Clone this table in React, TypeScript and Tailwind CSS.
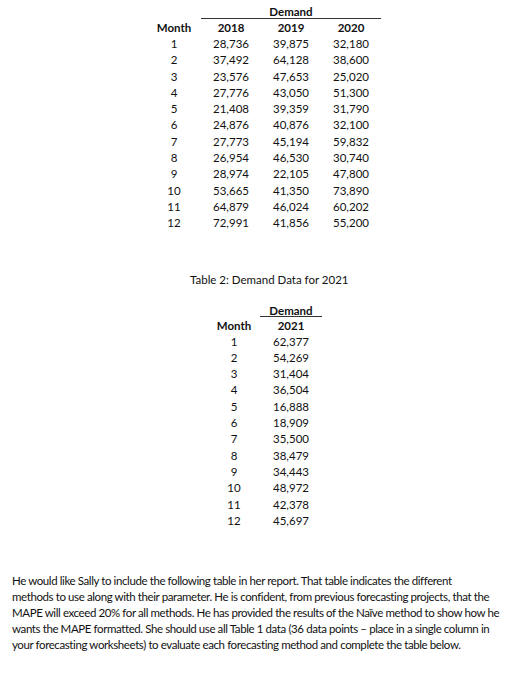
const table1 = [
  ["1", "28,736", "39,875", "32,180"],
  ["2", "37,492", "64,128", "38,600"],
  ["3", "23,576", "47,653", "25,020"],
  ["4", "27,776", "43,050", "51,300"],
  ["5", "21,408", "39,359", "31,790"],
  ["6", "24,876", "40,876", "32,100"],
  ["7", "27,773", "45,194", "59,832"],
  ["8", "26,954", "46,530", "30,740"],
  ["9", "28,974", "22,105", "47,800"],
  ["10", "53,665", "41,350", "73,890"],
  ["11", "64,879", "46,024", "60,202"],
  ["12", "72,991", "41,856", "55,200"],
]

const table2 = [
  ["1", "62,377"],
  ["2", "54,269"],
  ["3", "31,404"],
  ["4", "36,504"],
  ["5", "16,888"],
  ["6", "18,909"],
  ["7", "35,500"],
  ["8", "38,479"],
  ["9", "34,443"],
  ["10", "48,972"],
  ["11", "42,378"],
  ["12", "45,697"],
]

const paragraph = [
  "He would like Sally to include the following table in her report. That table indicates the different",
  "methods to use along with their parameter. He is confident, from previous forecasting projects, that the",
  "MAPE will exceed 20% for all methods. He has provided the results of the Naïve method to show how he",
  "wants the MAPE formatted. She should use all Table 1 data (36 data points – place in a single column in",
  "your forecasting worksheets) to evaluate each forecasting method and complete the table below.",
]

const App = () => {
  return (
    <div className="w-[526px] h-[700px] bg-white text-[#111] font-['Lato',sans-serif] text-[11.5px] overflow-hidden">
      {/* Table 1 */}
      <div className="pt-[5px] pl-[147px]">
        <div className="flex">
          <div className="w-[54px]" />
          <div className="w-[180px] h-[14px] leading-[14px] text-center font-bold border-b border-[#333]">Demand</div>
        </div>
        <div className="flex h-[17px] leading-[17px] font-bold">
          <div className="w-[54px] text-center">Month</div>
          <div className="w-[60px] text-center">2018</div>
          <div className="w-[60px] text-center">2019</div>
          <div className="w-[60px] text-center">2020</div>
        </div>
        {table1.map((row) => (
          <div key={row[0]} className="flex h-[16.3px] leading-[16.3px]">
            <div className="w-[54px] text-center">{row[0]}</div>
            <div className="w-[60px] text-center">{row[1]}</div>
            <div className="w-[60px] text-center">{row[2]}</div>
            <div className="w-[60px] text-center">{row[3]}</div>
          </div>
        ))}
      </div>

      {/* Table 2 caption */}
      <div className="mt-[40px] pl-[190px] h-[16px] leading-[16px]">Table 2: Demand Data for 2021</div>

      {/* Table 2 */}
      <div className="mt-[16px] pl-[208px]">
        <div className="flex">
          <div className="w-[52px]" />
          <div className="w-[62px] h-[13px] leading-[13px] text-center font-bold border-b border-[#333]">Demand</div>
        </div>
        <div className="flex h-[17px] leading-[17px] font-bold">
          <div className="w-[52px] text-center">Month</div>
          <div className="w-[62px] text-center">2021</div>
        </div>
        {table2.map((row) => (
          <div key={row[0]} className="flex h-[16.3px] leading-[16.3px]">
            <div className="w-[52px] text-center">{row[0]}</div>
            <div className="w-[62px] text-center">{row[1]}</div>
          </div>
        ))}
      </div>

      {/* Paragraph */}
      <div className="mt-[44px] pl-[12px] leading-[16px] tracking-[-0.4px]">
        {paragraph.map((line) => (
          <div key={line} className="whitespace-nowrap">{line}</div>
        ))}
      </div>
    </div>
  )
}

export default App
